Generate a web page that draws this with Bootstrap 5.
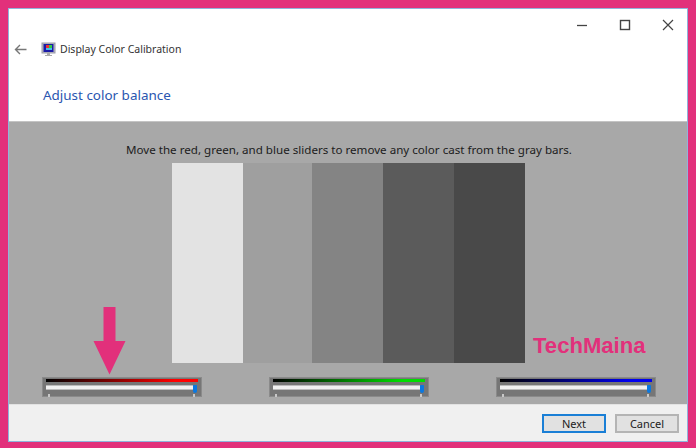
<!DOCTYPE html>
<html lang="en"><head><meta charset="utf-8"><title>Display Color Calibration</title>
<link href="https://cdn.jsdelivr.net/npm/bootstrap@5.3.0/dist/css/bootstrap.min.css" rel="stylesheet">
<style>
html,body{height:448px;overflow:hidden}
body{background:#e2307b;padding:8px 8px 6px;font-family:"Noto Sans","Open Sans",sans-serif;font-size:12px;color:#222}
.win{width:680px;height:434px;background:#fff;box-shadow:inset 0 0 0 1px #8fb4dc;padding:1px;position:relative}
.head{height:112px}
.caps{height:31px;padding-right:12px;gap:29px}
.caps svg{display:block}
.ttl{height:22px;padding-left:5px;margin-top:-2px}
.ttl .tx{font-size:10.5px;color:#333;margin-left:4px;margin-top:1px}
.ttl .bk{margin-right:14px}
.h1x{font-size:13.45px;color:#2a56b0;margin:25px 0 0 34px;line-height:20px}
.panel{height:283px;background:#a8a8a8;border-top:1px solid #c4c4c4;padding-top:19px;position:relative}
.msg{text-align:center;line-height:17px;height:20px;font-size:11.6px;color:#1c1c1c;width:680px}
.bars{height:200px;margin-left:163px;margin-top:2px}
.gb{height:200px}
.slrow{margin-top:14px;padding:0 31px 0 33px}
.sl{width:160px;height:20px;background:#767676;border:1px solid #8a8a8a;padding:1px 3px 0;position:relative}
.ramp{height:3px}
.r1{background:linear-gradient(90deg,#000,#f00 85%)}
.r2{background:linear-gradient(90deg,#000,#0d0 85%)}
.r3{background:linear-gradient(90deg,#000,#00e 85%)}
.track{height:5px;background:#f0f0f0;margin-top:3px;margin-right:5px;border:1px solid #bbb;border-width:1px 0}
.thumb{position:absolute;right:4px;top:7px;width:4px;height:8px;background:#0a78e0;border-radius:1px 1px 3px 3px}
.tick{position:absolute;top:16px;width:2px;height:3px;background:#c8c8c8}
.foot{height:37px;background:#f0f0f0;padding-right:8px;gap:9px;border-top:1px solid #e2e2e2}
.bt{width:64px;height:19px;padding:0;font-size:11px;line-height:15px;border-radius:0;background:#e1e1e1;color:#222;border:2px solid #b4b4b4}
.bt.df{border-color:#1a7fd6}
.wm{position:absolute;left:524px;top:210px;font-family:"Liberation Sans",sans-serif;font-weight:700;font-size:22.1px;line-height:28px;color:#e2307b}
.arr{position:absolute;left:84px;top:185px}
</style></head><body>
<div class="win d-flex flex-column">
<div class="head">
<div class="caps d-flex justify-content-end align-items-center">
<svg width="14" height="14" viewBox="0 0 14 14"><path d="M2 7.5h10" stroke="#444" stroke-width="1.3"/></svg>
<svg width="14" height="14" viewBox="0 0 14 14"><rect x="2.500" y="2.500" width="9" height="9" fill="none" stroke="#444" stroke-width="1.4"/></svg>
<svg width="14" height="14" viewBox="0 0 14 14"><path d="M2 2l10 10M12 2L2 12" stroke="#444" stroke-width="1.2"/></svg>
</div>
<div class="ttl d-flex align-items-center">
<svg class="bk" width="13" height="11" viewBox="0 0 13 11"><path d="M12.500 5.500H1.500M6 1L1.500 5.500 6 10" fill="none" stroke="#777" stroke-width="1.4"/></svg>
<svg width="15" height="15" viewBox="0 0 15 15"><rect x="1" y="1" width="13" height="10" fill="#bbb" stroke="#99a"/><rect x="2.500" y="2" width="10" height="8" fill="#1b1ba8"/><rect x="5" y="3" width="3" height="3" fill="#e33"/><rect x="8" y="3" width="3" height="3" fill="#3c4"/><rect x="5" y="6" width="6" height="2" fill="#4be"/><path d="M6 11h3v2h2v1H4v-1h2z" fill="#aaa"/></svg>
<span class="tx">Display Color Calibration</span>
</div>
<div class="h1x">Adjust color balance</div>
</div>
<div class="panel">
<div class="msg">Move the red, green, and blue sliders to remove any color cast from the gray bars.</div>
<div class="bars d-flex">
<div class="gb" style="width:71px;background:#e3e3e3"></div>
<div class="gb" style="width:69px;background:#9f9f9f"></div>
<div class="gb" style="width:71px;background:#848484"></div>
<div class="gb" style="width:71px;background:#5b5b5b"></div>
<div class="gb" style="width:71px;background:#494949"></div>
</div>
<div class="slrow d-flex justify-content-between">
<div class="sl"><div class="ramp r1"></div><div class="track"></div><div class="thumb"></div><i class="tick" style="left:5px"></i><i class="tick" style="right:6px"></i></div>
<div class="sl"><div class="ramp r2"></div><div class="track"></div><div class="thumb"></div><i class="tick" style="left:5px"></i><i class="tick" style="right:6px"></i></div>
<div class="sl"><div class="ramp r3"></div><div class="track"></div><div class="thumb"></div><i class="tick" style="left:5px"></i><i class="tick" style="right:6px"></i></div>
</div>
<div class="wm">TechMaina</div>
<svg class="arr" width="33" height="68" viewBox="0 0 33 68"><path d="M10.500 0h12v34h10L16.500 67.500.5 34h10z" fill="#e2307b"/></svg>
</div>
<div class="foot d-flex justify-content-end align-items-center">
<button class="btn bt df">Next</button>
<button class="btn bt">Cancel</button>
</div>
</div>
</body></html>
